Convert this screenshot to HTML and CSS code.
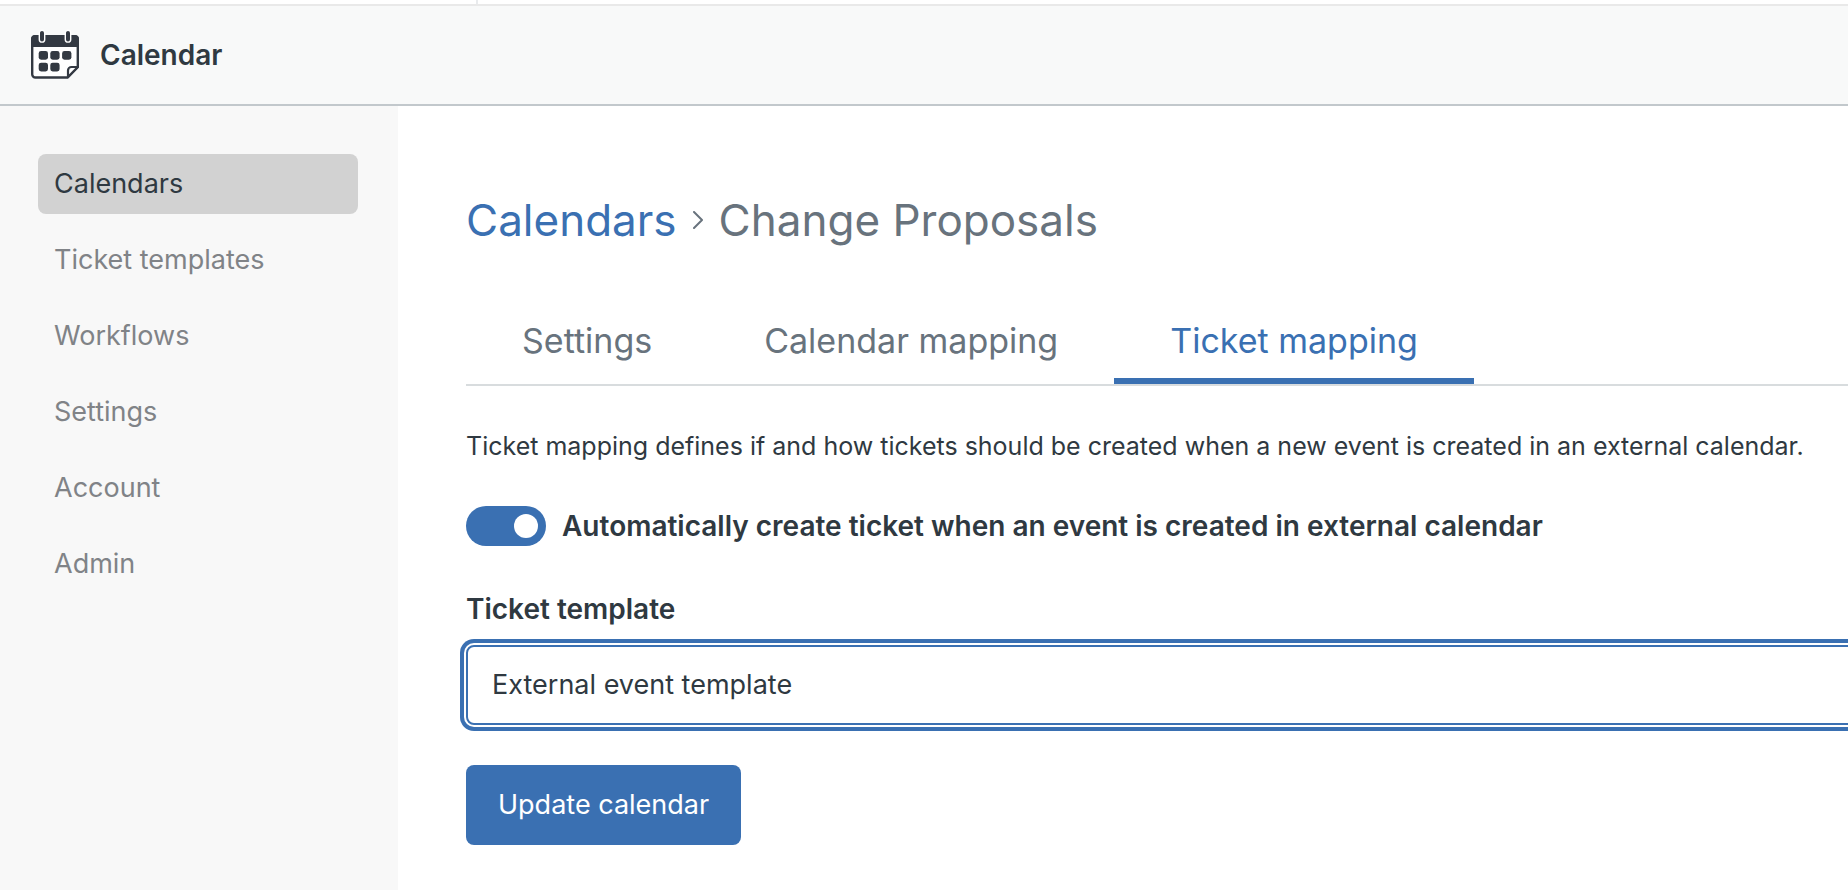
FILE: index.html
```html
<!DOCTYPE html>
<html lang="en">
<head>
<meta charset="utf-8">
<title>Calendar</title>
<link rel="stylesheet" href="styles.css">
</head>
<body>
<div class="top-strip"></div>
<header class="header">
  <svg class="logo" viewBox="0 0 48 48" aria-hidden="true">
    <path d="M4.500 5.200H43.500a3.300 3.300 0 0 1 3.300 3.300V36L36.500 46.500H4.500A3.300 3.300 0 0 1 1.200 43.200V8.500A3.300 3.300 0 0 1 4.500 5.200Z" fill="#fff" stroke="#333942" stroke-width="2.400"/>
    <path d="M0 16V8a4 4 0 0 1 4-4H44a4 4 0 0 1 4 4v8Z" fill="#333942"/>
    <g fill="#333942" stroke="#fff" stroke-width="1.400">
      <rect x="8.300" y="-.7" width="5.400" height="11.800" rx="2.700"/>
      <rect x="34.300" y="-.7" width="5.400" height="11.800" rx="2.700"/>
    </g>
    <g fill="#333942">
      <rect x="7.700" y="20" width="9.300" height="8.700" rx="2.400"/>
      <rect x="19.300" y="20" width="9.300" height="8.700" rx="2.400"/>
      <rect x="31.100" y="20" width="9.300" height="8.700" rx="2.400"/>
      <rect x="7.700" y="31.700" width="9.300" height="8.700" rx="2.400"/>
      <rect x="19.300" y="31.700" width="9.300" height="8.700" rx="2.400"/>
    </g>
    <path d="M37 46V39.500a3.500 3.500 0 0 1 3.500-3.500H46.800Z" fill="#fff" stroke="#333942" stroke-width="2.200" stroke-linejoin="round"/>
  </svg>
  <span class="app-name">Calendar</span>
</header>
<div class="layout">
  <nav class="sidebar" aria-label="Main">
    <a class="nav-item nav-item-active" href="#calendars" aria-current="page">Calendars</a>
    <a class="nav-item" href="#templates">Ticket templates</a>
    <a class="nav-item" href="#workflows">Workflows</a>
    <a class="nav-item" href="#settings">Settings</a>
    <a class="nav-item" href="#account">Account</a>
    <a class="nav-item" href="#admin">Admin</a>
  </nav>
  <main class="main">
    <h1 class="breadcrumb">
      <a class="crumb-link" href="#calendars">Calendars</a>
      <svg class="chevron" viewBox="0 0 10 18" aria-hidden="true"><path d="M1 1l8 8-8 8" fill="none" stroke="#68737d" stroke-width="2" stroke-linecap="round" stroke-linejoin="round"/></svg>
      <span>Change Proposals</span>
    </h1>
    <div class="tabs" role="tablist">
      <button class="tab" type="button" role="tab" aria-selected="false">Settings</button>
      <button class="tab" type="button" role="tab" aria-selected="false">Calendar mapping</button>
      <button class="tab tab-active" type="button" role="tab" aria-selected="true">Ticket mapping</button>
    </div>
    <p class="intro">Ticket mapping defines if and how tickets should be created when a new event is created in an external calendar.</p>
    <form class="form">
      <div class="toggle-row">
        <input class="toggle" type="checkbox" role="switch" id="auto-create" checked>
        <label class="label" for="auto-create">Automatically create ticket when an event is created in external calendar</label>
      </div>
      <label class="label" for="template">Ticket template</label>
      <select class="select" id="template"><option>External event template</option></select>
      <button class="submit" type="button">Update calendar</button>
    </form>
  </main>
</div>
</body>
</html>
```
FILE: styles.css
```css
* { box-sizing: border-box; }
body {
  margin: 0;
  min-height: 100vh;
  display: flex;
  flex-direction: column;
  overflow-x: hidden;
  background: #fff;
  color: #2f3941;
  font-family: Inter, "Liberation Sans", sans-serif;
  font-size: 27px;
  line-height: 40px;
}
.top-strip {
  height: 4px;
  width: 478px;
  border-right: 2px solid #e9ebed;
}
.header {
  display: flex;
  align-items: center;
  gap: 21px;
  height: 102px;
  padding: 0 31px;
  background: #f8f9f9;
  border-top: 2px solid #e9e9e9;
  border-bottom: 2px solid #c2c8cc;
}
.logo { width: 48px; height: 48px; overflow: visible; }
.app-name { font-size: 28px; font-weight: 600; }
.layout { flex: 1; display: flex; }
.sidebar {
  flex: none;
  width: 398px;
  padding: 48px 40px 48px 38px;
  display: flex;
  flex-direction: column;
  gap: 16px;
  background: #f8f8f8;
}
.nav-item {
  padding: 10px 16px;
  border-radius: 8px;
  color: #808387;
  text-decoration: none;
}
.nav-item-active { background: #d2d2d2; color: #2f3941; }
.main { flex: 1; min-width: 0; padding: 82px 0 32px 68px; }
.breadcrumb {
  display: flex;
  align-items: center;
  gap: 16px;
  margin: 0 0 40px;
  color: #68737d;
  font-size: 44px;
  font-weight: 400;
  line-height: 64px;
}
.crumb-link { color: #3a70b2; text-decoration: none; }
.chevron { width: 10px; height: 18px; }
.tabs { display: flex; border-bottom: 2px solid #d8dcde; }
.tab {
  padding: 27px 56px 15px;
  border: 0;
  border-bottom: 6px solid transparent;
  background: none;
  color: #68737d;
  font: inherit;
  font-size: 34px;
  line-height: 44px;
}
.tab-active { border-bottom-color: #3a70b2; color: #3a70b2; }
.intro { margin: 40px 0; font-size: 25px; white-space: nowrap; }
.form { display: flex; flex-direction: column; }
.toggle-row { display: flex; align-items: center; gap: 16px; margin-bottom: 43px; }
.toggle {
  appearance: none;
  display: flex;
  flex: none;
  justify-content: flex-end;
  width: 80px;
  height: 40px;
  margin: 0;
  padding: 8px;
  border-radius: 20px;
  background: #3a70b2;
}
.toggle::before { content: ""; width: 24px; height: 24px; border-radius: 50%; background: #fff; }
.label { font-size: 28px; font-weight: 600; white-space: nowrap; }
.select {
  appearance: none;
  height: 80px;
  margin: 16px -16px 40px 0;
  padding: 0 24px;
  border: 2px solid #3a70b2;
  border-radius: 8px;
  outline: 0;
  box-shadow: 0 0 0 2px #fff, 0 0 0 6px #3a70b2;
  background: #fff;
  color: #2f3941;
  font: inherit;
}
.submit {
  align-self: flex-start;
  padding: 20px 32px;
  border: 0;
  border-radius: 8px;
  background: #3a70b2;
  color: #fff;
  font: inherit;
}
```
